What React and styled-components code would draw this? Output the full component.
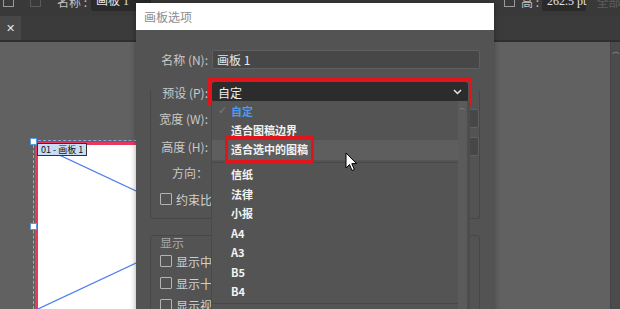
import React from "react";
import styled, { createGlobalStyle } from "styled-components";

const GlobalStyle = createGlobalStyle`
  html, body {
    margin: 0;
    padding: 0;
    background: #5f5f5f;
  }
  body {
    font-family: "Noto Sans CJK SC", "Noto Sans", sans-serif;
  }
`;

const Screen = styled.div`
  position: relative;
  width: 620px;
  height: 309px;
  overflow: hidden;
  display: flex;
  flex-direction: column;
  background: #5f5f5f;
  font-family: "Noto Sans CJK SC", "Noto Sans", sans-serif;
`;

/* ---------- top control bar (clipped at the top of the shot) ---------- */

const Toolbar = styled.div`
  height: 16px;
  flex-shrink: 0;
  background: #393939;
  overflow: hidden;
  display: flex;
`;

const ToolGroup = styled.div`
  display: flex;
  align-items: center;
  gap: ${(p) => p.$gap || 0}px;
  height: 20px;
  margin-top: -9px;
  padding-left: ${(p) => p.$pad || 0}px;
  flex-shrink: 0;
  width: ${(p) => (p.$width ? `${p.$width}px` : "auto")};
  margin-left: ${(p) => (p.$right ? "auto" : "0")};
`;

const ToolIcon = styled.span`
  width: 9px;
  height: 9px;
  border: 1px solid ${(p) => (p.$dim ? "#5a5a5a" : "#9a9a9a")};
  display: inline-block;
  flex-shrink: 0;
  margin-right: ${(p) => p.$mr || 0}px;
`;

const ToolLabel = styled.span`
  font-size: 12px;
  color: ${(p) => (p.$dim ? "#5e5e5e" : "#c4c4c4")};
  white-space: nowrap;
  margin-left: ${(p) => p.$ml || 0}px;
`;

const ToolInput = styled.span`
  display: inline-block;
  width: ${(p) => p.$w}px;
  height: 20px;
  line-height: 20px;
  padding-left: 5px;
  margin-left: ${(p) => p.$ml || 0}px;
  box-sizing: border-box;
  background: #2a2a2a;
  border-radius: 2px;
  font-size: 12px;
  color: #e6e6e6;
  font-family: "Liberation Serif", "Noto Sans CJK SC", serif;
  white-space: nowrap;
`;

/* ---------- document tab strip ---------- */

const TabStrip = styled.div`
  height: 24px;
  flex-shrink: 0;
  background: #3b3b3b;
  border-bottom: 2px solid #2f2f2f;
  display: flex;
`;

const Tab = styled.div`
  width: 21px;
  background: #474747;
  display: flex;
  align-items: center;
  justify-content: center;
  color: #e4e4e4;
  font-size: 11px;
  font-weight: bold;
  font-family: "DejaVu Sans", sans-serif;
`;

/* ---------- workspace ---------- */

const Workspace = styled.div`
  flex: 1;
  display: flex;
  min-height: 0;
`;

const Canvas = styled.div`
  flex: 1;
  position: relative;
  background: #616161;
`;

const Dock = styled.div`
  width: 9px;
  background: #4b4b4b;
  border-left: 1px solid #444;
  display: flex;
  justify-content: center;
  padding-top: 4px;
  color: #a8a8a8;
  font-size: 8px;
  font-family: "DejaVu Sans", sans-serif;
`;

const Artboard = styled.div`
  position: absolute;
  left: 33px;
  top: 98px;
  border: 1px dashed #7fb0e6;
  padding: 1px;
`;

const ArtboardPage = styled.div`
  position: relative;
  width: 350px;
  height: 164px;
  background: #ffffff;
  border: 3px solid #e8385e;
`;

const Diagonals = styled.svg`
  position: absolute;
  inset: 0;
  width: 100%;
  height: 100%;
`;

const BoardTag = styled.div`
  position: absolute;
  left: -1px;
  top: -2px;
  padding: 0 3px;
  height: 11px;
  line-height: 11px;
  background: #c8ddf5;
  border: 1px solid #333;
  font-size: 9px;
  color: #111;
  white-space: nowrap;
`;

const Handle = styled.div`
  position: absolute;
  left: -4px;
  top: ${(p) => p.$top}px;
  width: 5px;
  height: 5px;
  background: #fff;
  border: 1px solid #5a9be0;
`;

/* ---------- artboard options dialog ---------- */

const Dialog = styled.div`
  position: absolute;
  left: 136px;
  top: 3px;
  width: 358px;
  height: 330px;
  background: #535353;
  box-shadow: 0 0 6px rgba(0, 0, 0, 0.35);
`;

const DialogTitle = styled.div`
  height: 27px;
  line-height: 27px;
  background: #ffffff;
  padding-left: 8px;
  font-size: 12px;
  color: #8c8c8c;
`;

const DialogBody = styled.div`
  padding: 19px 14px 0 14px;
`;

const FormRow = styled.div`
  display: grid;
  grid-template-columns: ${(p) => p.$label || 58}px 1fr;
  column-gap: 4px;
  align-items: center;
  height: 20px;
  margin-top: ${(p) => p.$mt || 0}px;
`;

const Label = styled.span`
  text-align: right;
  font-size: 12px;
  color: #c9c9c9;
  white-space: nowrap;
`;

const TextField = styled.div`
  height: 19px;
  line-height: 17px;
  box-sizing: border-box;
  background: #474747;
  border: 1px solid #5f5f5f;
  border-radius: 2px;
  padding-left: 4px;
  font-size: 12px;
  color: #e8e8e8;
`;

const Highlight = styled.div`
  width: 264px;
  height: 28px;
  margin: -4px 0 -4px -4px;
  box-sizing: border-box;
  border: 3px solid #e0141a;
  padding: 1px;
`;

const Select = styled.div`
  height: 20px;
  box-sizing: border-box;
  background: #2c2c2c;
  border-radius: 3px;
  display: flex;
  align-items: center;
  justify-content: space-between;
  padding: 0 6px 0 6px;
  font-size: 12px;
  color: #f0f0f0;
`;

const Group = styled.div`
  margin-top: ${(p) => p.$mt}px;
  border: 1px solid #474747;
  border-top-color: ${(p) => (p.$open ? "transparent" : "#474747")};
  border-radius: 3px;
  padding-bottom: ${(p) => p.$pb || 0}px;
`;

const GroupTitle = styled.div`
  height: 12px;
  line-height: 12px;
  padding-left: 9px;
  margin-top: 1px;
  font-size: 12px;
  color: #a9a9a9;
`;

const CheckRow = styled.label`
  display: flex;
  align-items: center;
  gap: 4px;
  height: 20px;
  padding-left: 9px;
  margin-top: ${(p) => p.$mt || 0}px;
  font-size: 12px;
  color: #cfcfcf;
  white-space: nowrap;
`;

const Box = styled.span`
  width: 10px;
  height: 10px;
  border: 1px solid #b4b4b4;
  border-radius: 1px;
  flex-shrink: 0;
`;

/* ---------- preset dropdown ---------- */

const Menu = styled.div`
  position: absolute;
  left: 75px;
  top: 98px;
  display: flex;
`;

const MenuList = styled.div`
  width: 247px;
  height: 240px;
  box-sizing: border-box;
  background: #545454;
  border-left: 1px solid #4a4a4a;
`;

const MenuItem = styled.div`
  position: relative;
  height: 19.5px;
  display: flex;
  align-items: center;
  padding-left: 19px;
  background: ${(p) => (p.$hover ? "#5e5e5e" : "transparent")};
  font-size: 11px;
  font-weight: bold;
  color: ${(p) => (p.$active ? "#4c9bf0" : "#f2f2f2")};
  font-family: "Noto Sans CJK SC", "Liberation Serif", serif;
`;

const Check = styled.span`
  position: absolute;
  left: 6px;
  color: #7a7a7a;
  font-size: 11px;
  font-weight: normal;
  font-family: "DejaVu Sans", sans-serif;
`;

const Marked = styled.span`
  outline: 3px solid #e0141a;
  outline-offset: 3px;
  line-height: 15px;
`;

const Separator = styled.div`
  height: 1px;
  margin: 2px 0 2px;
  background: #484848;
`;

const Scrollbar = styled.div`
  width: 12px;
  height: 240px;
  background: #5b5b5b;
  border-right: 3px solid #4d4d4d;
  box-sizing: border-box;
  display: flex;
  justify-content: center;
  padding-top: 2px;
  color: #9a9a9a;
  font-size: 7px;
  font-family: "DejaVu Sans", sans-serif;
`;

const Cursor = styled.svg`
  position: absolute;
  left: 345px;
  top: 152px;
  width: 13px;
  height: 20px;
`;

const presets = ["信纸", "法律", "小报", "A4", "A3", "B5", "B4"];

export default function App() {
  return (
    <Screen>
      <GlobalStyle />
      <Toolbar>
        <ToolGroup $pad={3}>
          <ToolIcon $mr={16} />
          <ToolIcon $dim $mr={16} />
          <ToolLabel>名称 :</ToolLabel>
          <ToolInput $w={60} $ml={4}>画板 1</ToolInput>
        </ToolGroup>
        <ToolGroup $right $width={116}>
          <ToolIcon />
          <ToolLabel $ml={6}>高 :</ToolLabel>
          <ToolInput $w={52} $ml={3}>262.5 pt</ToolInput>
          <ToolLabel $dim $ml={10}>全部重排</ToolLabel>
        </ToolGroup>
      </Toolbar>

      <TabStrip>
        <Tab>✕</Tab>
      </TabStrip>

      <Workspace>
        <Canvas>
          <Artboard>
            <ArtboardPage>
              <Diagonals viewBox="0 0 350 164" preserveAspectRatio="none">
                <line x1="0" y1="0" x2="350" y2="164" stroke="#4f7ff0" strokeWidth="1.2" />
                <line x1="0" y1="164" x2="350" y2="0" stroke="#4f7ff0" strokeWidth="1.2" />
              </Diagonals>
              <BoardTag>01 - 画板 1</BoardTag>
            </ArtboardPage>
            <Handle $top={-3} />
            <Handle $top={82} />
          </Artboard>
        </Canvas>
        <Dock>︿</Dock>
      </Workspace>

      <Dialog>
        <DialogTitle>画板选项</DialogTitle>
        <DialogBody>
          <FormRow $label={58}>
            <Label>名称 (N):</Label>
            <TextField>画板 1</TextField>
          </FormRow>

          <Group $mt={21} $pb={9} $open>
            <FormRow $label={57} $mt={-9}>
              <Label>预设 (P):</Label>
              <Highlight>
                <Select>
                  <span>自定</span>
                  <svg width="9" height="6" viewBox="0 0 9 6">
                    <path d="M1 1 L4.5 4.5 L8 1" fill="none" stroke="#e6e6e6" strokeWidth="1.5" />
                  </svg>
                </Select>
              </Highlight>
            </FormRow>
            <FormRow $label={57} $mt={6}>
              <Label>宽度 (W):</Label>
              <TextField />
            </FormRow>
            <FormRow $label={57} $mt={8}>
              <Label>高度 (H):</Label>
              <TextField />
            </FormRow>
            <FormRow $label={57} $mt={6}>
              <Label>方向：</Label>
              <span />
            </FormRow>
            <CheckRow $mt={7}>
              <Box />
              约束比例
            </CheckRow>
          </Group>

          <Group $mt={16}>
            <GroupTitle>显示</GroupTitle>
            <CheckRow $mt={2}>
              <Box />
              显示中心标记
            </CheckRow>
            <CheckRow $mt={2}>
              <Box />
              显示十字线
            </CheckRow>
            <CheckRow $mt={2}>
              <Box />
              显示视频安全区域
            </CheckRow>
          </Group>
        </DialogBody>

        <Menu>
          <MenuList>
            <MenuItem $active>
              <Check>✓</Check>自定
            </MenuItem>
            <MenuItem>适合图稿边界</MenuItem>
            <MenuItem $hover>
              <Marked>适合选中的图稿</Marked>
            </MenuItem>
            <Separator />
            {presets.map((p) => (
              <MenuItem key={p}>{p}</MenuItem>
            ))}
            <Separator />
          </MenuList>
          <Scrollbar>︿</Scrollbar>
        </Menu>
      </Dialog>

      <Cursor viewBox="0 0 13 20">
        <path
          d="M1 1 L1 16 L4.5 12.5 L7 18.5 L9.3 17.5 L6.8 11.6 L11.5 11.6 Z"
          fill="#ffffff"
          stroke="#000000"
          strokeWidth="1"
          strokeLinejoin="round"
        />
      </Cursor>
    </Screen>
  );
}
